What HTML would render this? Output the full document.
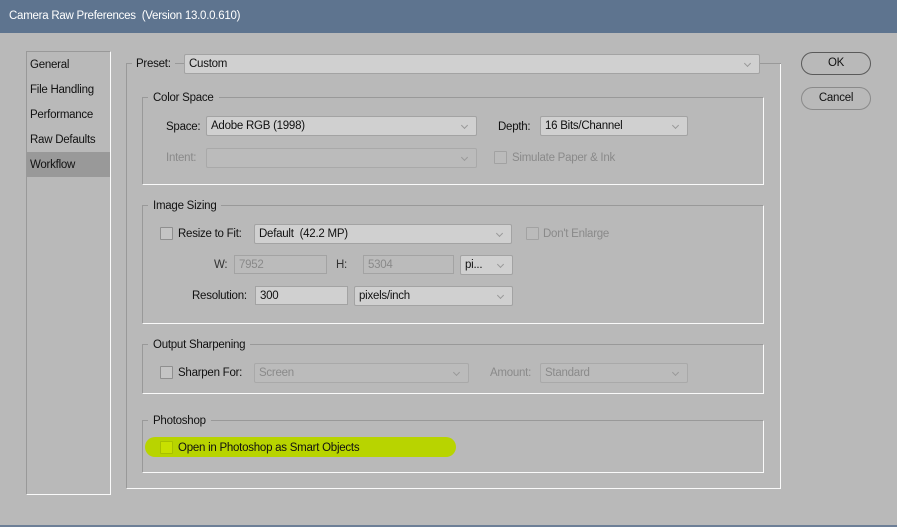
<!DOCTYPE html>
<html><head><meta charset="utf-8"><style>
*{box-sizing:border-box;margin:0;padding:0}
body{width:897px;height:527px;background:#b9b9b9;font-family:"Liberation Sans",Tahoma,sans-serif;font-size:11.5px;letter-spacing:-0.25px;color:#111;position:relative;overflow:hidden}
.a{position:absolute}
.t{position:absolute;white-space:nowrap;line-height:14px}
.d{color:#8a8a8a}
.lg{position:absolute;background:#b9b9b9;padding:0 5px;line-height:14px;white-space:nowrap}
.s{position:absolute;background:#d0d0d0;border:1px solid #a3a3a3;border-radius:2px;height:20px;line-height:19px;padding-left:4px;white-space:nowrap}
.s.dis{background:#bbbbbb;border-color:#a9a9a9;color:#8a8a8a}
.s:after{content:"";position:absolute;right:9px;top:6px;width:4px;height:4px;border-right:1px solid #999;border-bottom:1px solid #999;transform:rotate(45deg)}
.i{position:absolute;background:#d0d0d0;border:1px solid #a3a3a3;height:19px;line-height:18px;padding-left:4px}
.i.dis{background:#bbbbbb;color:#8a8a8a}
.c{position:absolute;width:13px;height:13px;border:1px solid #8f8f8f;background:#c4c4c4;border-radius:1px}
.c.dis{border-color:#a2a2a2;background:#bbb}
.b{position:absolute;width:70px;height:23px;border:1px solid #5a5a5a;border-radius:12px;text-align:center;line-height:21px}
.box{position:absolute;border-left:1px solid #999;border-top:1px solid #999;border-right:1px solid #fafafa;border-bottom:1px solid #fafafa}
</style></head><body>
<div class="a" style="left:0;top:0;width:897px;height:33px;background:#5e748f"></div>
<div class="t" style="left:9px;top:9px;color:#fff">Camera Raw Preferences&nbsp; (Version 13.0.0.610)</div>
<div class="a" style="left:0;top:525px;width:897px;height:2px;background:#6d7f97"></div>

<div class="box" style="left:26px;top:51px;width:85px;height:444px"></div>
<div class="a" style="left:27px;top:152px;width:83px;height:25px;background:#999"></div>
<div class="t" style="left:30px;top:58px">General</div>
<div class="t" style="left:30px;top:83px">File Handling</div>
<div class="t" style="left:30px;top:108px">Performance</div>
<div class="t" style="left:30px;top:133px">Raw Defaults</div>
<div class="t" style="left:30px;top:158px">Workflow</div>

<div class="box" style="left:126px;top:63px;width:655px;height:426px"></div>
<div class="lg" style="left:132px;top:57px;padding:0 4px">Preset:</div>
<div class="a" style="left:759px;top:63px;width:22px;height:1px;background:#999"></div>
<div class="s" style="left:184px;top:54px;width:576px">Custom</div>

<div class="box" style="left:142px;top:97px;width:622px;height:88px"></div>
<div class="lg" style="left:148px;top:91px">Color Space</div>
<div class="t" style="left:166px;top:120px">Space:</div>
<div class="s" style="left:206px;top:116px;width:271px">Adobe RGB (1998)</div>
<div class="t" style="left:498px;top:120px">Depth:</div>
<div class="s" style="left:540px;top:116px;width:148px">16 Bits/Channel</div>
<div class="t d" style="left:166px;top:151px">Intent:</div>
<div class="s dis" style="left:206px;top:148px;width:271px"></div>
<div class="c dis" style="left:494px;top:151px"></div>
<div class="t d" style="left:512px;top:151px">Simulate Paper &amp; Ink</div>

<div class="box" style="left:142px;top:205px;width:622px;height:119px"></div>
<div class="lg" style="left:148px;top:199px">Image Sizing</div>
<div class="c" style="left:160px;top:227px"></div>
<div class="t" style="left:178px;top:227px">Resize to Fit:</div>
<div class="s" style="left:254px;top:224px;width:258px">Default&nbsp; (42.2 MP)</div>
<div class="c dis" style="left:526px;top:227px"></div>
<div class="t d" style="left:543px;top:227px">Don't Enlarge</div>
<div class="t" style="left:214px;top:258px;color:#333">W:</div>
<div class="i dis" style="left:234px;top:255px;width:93px">7952</div>
<div class="t" style="left:336px;top:258px;color:#333">H:</div>
<div class="i dis" style="left:363px;top:255px;width:91px">5304</div>
<div class="s" style="left:460px;top:255px;width:53px">pi...</div>
<div class="t" style="left:192px;top:289px">Resolution:</div>
<div class="i" style="left:255px;top:286px;width:93px">300</div>
<div class="s" style="left:354px;top:286px;width:159px">pixels/inch</div>

<div class="box" style="left:142px;top:344px;width:622px;height:50px"></div>
<div class="lg" style="left:148px;top:338px">Output Sharpening</div>
<div class="c" style="left:160px;top:366px"></div>
<div class="t" style="left:178px;top:366px">Sharpen For:</div>
<div class="s dis" style="left:254px;top:363px;width:215px">Screen</div>
<div class="t d" style="left:490px;top:366px">Amount:</div>
<div class="s dis" style="left:540px;top:363px;width:148px">Standard</div>

<div class="box" style="left:142px;top:420px;width:622px;height:53px"></div>
<div class="lg" style="left:148px;top:414px">Photoshop</div>
<div class="a" style="left:145px;top:437px;width:311px;height:20px;background:#b8d400;border-radius:10px"></div>
<div class="c" style="left:160px;top:441px;background:#c8e000;border-color:#a8c000"></div>
<div class="t" style="left:178px;top:441px">Open in Photoshop as Smart Objects</div>

<div class="b" style="left:801px;top:52px">OK</div>
<div class="b" style="left:801px;top:87px;border-color:#8a8a8a">Cancel</div>
</body></html>
